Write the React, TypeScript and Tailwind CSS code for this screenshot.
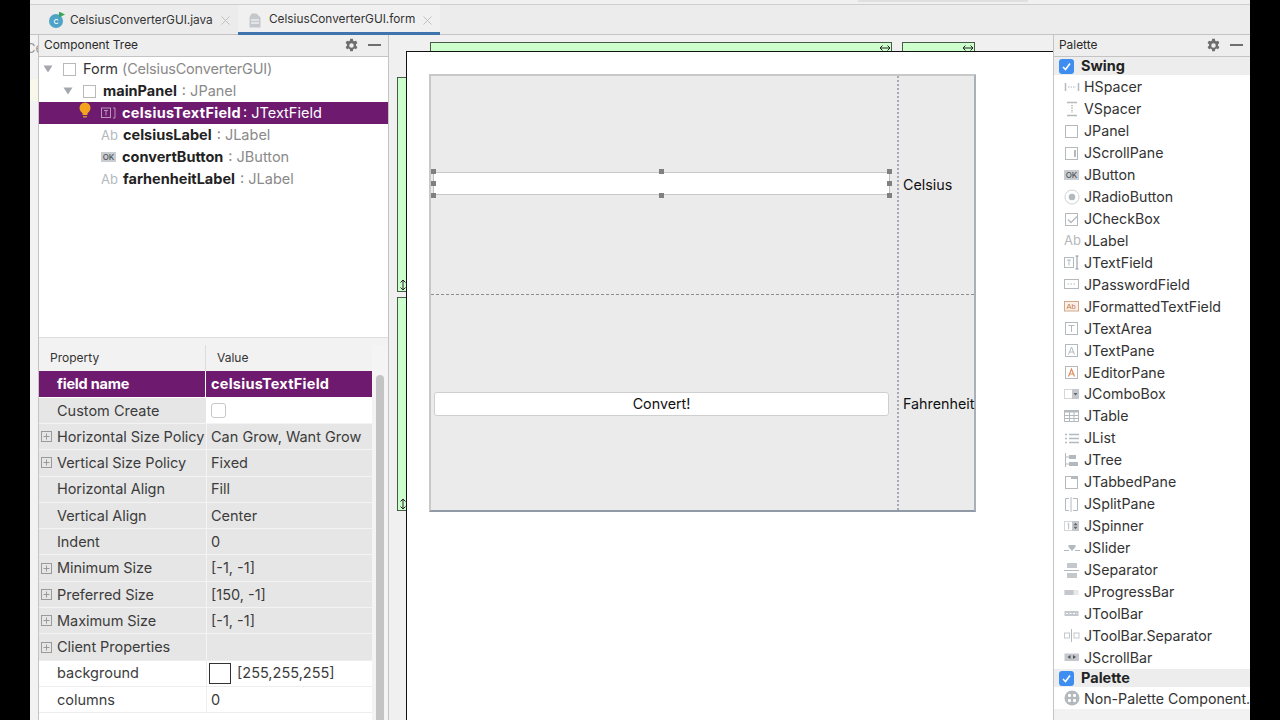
import React from 'react';

const G = '#b4b9be';

const Box = ({ children, w = 16, h = 16 }: { children?: React.ReactNode; w?: number; h?: number }) => (
  <svg width={w} height={h} viewBox="0 0 16 16" fill="none" className="shrink-0">
    {children}
  </svg>
);

const icons: Record<string, React.ReactNode> = {
  HSpacer: <Box><path d="M1.5 4v8M14.5 4v8" stroke={G} strokeWidth="1.5" /><path d="M4 8h8" stroke={G} strokeDasharray="1.5 1" /></Box>,
  VSpacer: <Box><path d="M3 1.5h10M3 14.5h10" stroke={G} strokeWidth="1.5" /><path d="M8 4v8" stroke={G} strokeDasharray="1.5 1" strokeWidth="1.5" /></Box>,
  JPanel: <Box><rect x="1.5" y="2.5" width="12" height="12" stroke={G} /></Box>,
  JScrollPane: <Box><rect x="1.5" y="2.5" width="12" height="12" stroke={G} /><path d="M11 5v7" stroke={G} strokeWidth="2" /></Box>,
  JButton: <OkIcon />,
  JRadioButton: <Box><circle cx="8" cy="8" r="7" stroke="#cfd3d6" /><circle cx="8" cy="8" r="3.3" fill={G} /></Box>,
  JCheckBox: <Box><rect x="1.5" y="2.5" width="12" height="12" stroke={G} /><path d="M4 8.5l3 3 6-6" stroke={G} strokeWidth="1.3" /></Box>,
  JLabel: <AbIcon />,
  JTextField: <Box><rect x="0.5" y="3.5" width="9" height="10" stroke={G} /><path d="M3 6h4M5 6v5.5" stroke={G} /><path d="M13 2v13M11.5 2h3M11.5 15h3" stroke="#8e9499" /></Box>,
  JPasswordField: <Box><rect x="0.5" y="3.5" width="14" height="9" stroke={G} /><path d="M3.5 8h8" stroke={G} strokeDasharray="1.5 1.5" /></Box>,
  JFormattedTextField: <Box><rect x="0.5" y="3.5" width="14" height="9.5" stroke="#d4a78a" fill="#faf0e8" /><text x="2.6" y="11" fontSize="7.5" fill="#c8794a" fontFamily="Liberation Sans, sans-serif">Ab</text></Box>,
  JTextArea: <Box><rect x="1.5" y="2.5" width="12" height="12" stroke={G} /><path d="M4.5 5.5h6M7.5 5.5v6.5" stroke={G} /></Box>,
  JTextPane: <Box><rect x="1.5" y="2.5" width="12" height="12" stroke={G} /><path d="M4.5 12.5L7.5 5l3 7.5M5.5 10h4" stroke={G} /></Box>,
  JEditorPane: <Box><rect x="1.5" y="2.5" width="12" height="12" stroke={G} /><path d="M4.5 12.5L7.5 5l3 7.5M5.5 10h4" stroke="#e08a5a" strokeWidth="1.2" /></Box>,
  JComboBox: <Box><rect x="0.5" y="3.5" width="14" height="9" stroke="#d4d7da" /><rect x="8" y="3" width="7" height="10" fill="#c4c8cc" /><path d="M9.5 7h4l-2 2.5z" fill="#5f6468" /></Box>,
  JTable: <Box><rect x="0.5" y="2.5" width="14" height="11" stroke={G} /><path d="M0.5 3.5h14" stroke={G} strokeWidth="2" /><path d="M0.5 7.5h14M0.5 10.5h14M5.5 3v10M10 3v10" stroke={G} /></Box>,
  JList: <Box><path d="M1 4.5h2M1 8.5h2M1 12.5h2M5 4.5h10M5 8.5h10M5 12.5h10" stroke={G} strokeWidth="1.4" /></Box>,
  JTree: <Box><path d="M1.5 1v14M1.5 5h4M1.5 12h4" stroke={G} /><rect x="5" y="3" width="7" height="4" fill={G} /><rect x="5" y="10" width="9" height="4" fill={G} /></Box>,
  JTabbedPane: <Box><rect x="1.5" y="2.5" width="12" height="12" stroke={G} /><rect x="7" y="2" width="7" height="3" fill={G} /></Box>,
  JSplitPane: <Box><path d="M5 2.5H1.5v12H5M9 2.5h4.5v12H9" stroke={G} /><path d="M7 1v15" stroke={G} /></Box>,
  JSpinner: <Box><rect x="0.5" y="3.5" width="14" height="9" stroke="#d4d7da" /><rect x="8" y="3" width="7" height="10" fill="#c4c8cc" /><path d="M9.5 7.2h4l-2-2.4zM9.5 8.8h4l-2 2.4z" fill="#5f6468" /><path d="M3.5 6l1.2-.8v6" stroke={G} /></Box>,
  JSlider: <Box><path d="M0 10.5h5M11 10.5h5" stroke={G} /><path d="M4.5 5h7v2l-3.5 4-3.5-4z" fill={G} /></Box>,
  JSeparator: <Box><rect x="3" y="1" width="10" height="5" fill="#c4c8cc" /><path d="M0 8.5h15" stroke={G} /><rect x="3" y="11" width="10" height="5" fill="#c4c8cc" /></Box>,
  JProgressBar: <Box><rect x="0.5" y="6" width="14" height="5" fill="#e6e8ea" /><rect x="0.5" y="6" width="9" height="5" fill="#c4c8cc" /></Box>,
  JToolBar: <Box><rect x="0.5" y="6" width="14" height="5" fill="#c4c8cc" /><path d="M2 8.5h11" stroke="#fff" strokeDasharray="2 1.5" /></Box>,
  'JToolBar.Separator': <Box><rect x="0.5" y="6" width="5" height="5" stroke="#c4c8cc" /><path d="M7.5 2v13" stroke={G} /><rect x="10" y="6" width="5" height="5" stroke="#c4c8cc" /></Box>,
  JScrollBar: <Box><rect x="0.5" y="4.5" width="14.5" height="7.5" fill="#c4c8cc" /><path d="M6.5 6v4l-3-2zM9 6v4l3-2z" fill="#4f5458" /></Box>,
  'Non-Palette Component': <Box><circle cx="8" cy="8" r="7.5" fill={G} /><rect x="4" y="4" width="3" height="3" rx="1" fill="#fff" /><rect x="9" y="4" width="3" height="3" rx="1" fill="#fff" /><rect x="4" y="9" width="3" height="3" rx="1" fill="#fff" /><rect x="9" y="9" width="3" height="3" rx="1" fill="#fff" /></Box>,
};

function OkIcon() {
  return (
    <span className="w-[15px] h-[10px] shrink-0 bg-[#c9cdd1] text-[#4f5458] text-[8px] leading-[10px] font-medium text-center">OK</span>
  );
}

function AbIcon() {
  return <span className="w-[17px] shrink-0 text-[#b4b8bc] text-[13px] leading-none text-center">Ab</span>;
}

const Gear = () => (
  <svg width="15" height="15" viewBox="0 0 16 16" fill="#6e6e6e" className="shrink-0">
    <path fillRule="evenodd" d="M6.6.8h2.8l.4 2 1.2.7 1.9-.7 1.4 2.4-1.5 1.4v1.6l1.5 1.4-1.4 2.4-1.9-.7-1.2.7-.4 2H6.6l-.4-2-1.2-.7-1.9.7L1.700 9.600l1.500-1.400V6.600L1.700 5.200l1.400-2.400 1.900.7 1.200-.7zM8 5.500a2.200 2.200 0 100 4.800 2.200 2.200 0 000-4.800z" />
  </svg>
);

const PanelHeader = ({ title }: { title: string }) => (
  <div className="h-[22px] shrink-0 flex items-center bg-[#eeeeee] border-b border-[#c4c4c4] pl-[5px] pr-[7px] pb-[1px] text-[11.900px] text-[#2a2a2a]">
    <span className="flex-1 truncate">{title}</span>
    <Gear />
    <span className="ml-[9px] w-[13px] h-[2px] bg-[#6e6e6e]" />
  </div>
);

const Arrow = () => (
  <svg width="10" height="8" viewBox="0 0 10 8" className="shrink-0">
    <path d="M0.500 0.500h9L5 7.500z" fill="#a4a8ac" />
  </svg>
);

const treeRows = [
  { icon: 'ab', name: 'celsiusLabel', type: 'JLabel' },
  { icon: 'ok', name: 'convertButton', type: 'JButton' },
  { icon: 'ab', name: 'farhenheitLabel', type: 'JLabel' },
];

const ComponentTree = () => (
  <div className="h-[280px] shrink-0 bg-white text-[14.500px] pt-[1px]">
    <div className="h-[22px] flex items-center pl-[4px]">
      <Arrow />
      <span className="ml-[10px] w-[13px] h-[13px] border border-[#b9b9b9]" />
      <span className="ml-[7px] text-[#333]">Form</span>
      <span className="ml-[4px] text-[#8a8a8a] tracking-[-0.2px]">(CelsiusConverterGUI)</span>
    </div>
    <div className="h-[22px] flex items-center pl-[24px]">
      <Arrow />
      <span className="ml-[10px] w-[13px] h-[13px] border border-[#b9b9b9]" />
      <span className="ml-[7px] font-bold text-[#222]">mainPanel</span>
      <span className="ml-[5px] text-[#8a8a8a]">: JPanel</span>
    </div>
    <div className="h-[22px] flex items-center pl-[39px] bg-[#6d1a6f] text-white">
      <svg width="14" height="18" viewBox="0 0 14 18" className="shrink-0 -mt-[4px]">
        <circle cx="7" cy="6" r="5.500" fill="#f3a41f" />
        <rect x="4.500" y="10" width="5" height="3" fill="#f3a41f" />
        <rect x="5" y="14" width="4" height="1.500" fill="#c78a3a" />
      </svg>
      <svg width="16" height="14" viewBox="0 0 16 14" fill="none" className="ml-[9px] shrink-0">
        <rect x="0.500" y="2" width="9" height="9.500" stroke="#b79ab8" />
        <path d="M3 4.500h4M5 4.500v5" stroke="#b79ab8" />
        <path d="M12 2h2v10h-2" stroke="#b79ab8" />
      </svg>
      <span className="ml-[5px] font-bold tracking-[0.3px]">celsiusTextField</span>
      <span className="ml-[2px]">: JTextField</span>
    </div>
    {treeRows.map((r) => (
      <div key={r.name} className="h-[22px] flex items-center pl-[62px]">
        {r.icon === 'ab' ? <AbIcon /> : <OkIcon />}
        <span className={`font-bold text-[#222] ${r.icon === 'ab' ? 'ml-[5px]' : 'ml-[6px]'}`}>{r.name}</span>
        <span className="ml-[5px] text-[#8a8a8a]">: {r.type}</span>
      </div>
    ))}
  </div>
);

const Plus = () => (
  <svg width="11" height="11" viewBox="0 0 11 11" fill="none" className="shrink-0">
    <rect x="0.500" y="0.500" width="10" height="10" stroke="#9a9a9a" />
    <path d="M2.500 5.500h6M5.500 2.500v6" stroke="#9a9a9a" />
  </svg>
);

const propRows: { name: string; value: string; plus?: boolean }[] = [
  { name: 'Horizontal Size Policy', value: 'Can Grow, Want Grow', plus: true },
  { name: 'Vertical Size Policy', value: 'Fixed', plus: true },
  { name: 'Horizontal Align', value: 'Fill' },
  { name: 'Vertical Align', value: 'Center' },
  { name: 'Indent', value: '0' },
  { name: 'Minimum Size', value: '[-1, -1]', plus: true },
  { name: 'Preferred Size', value: '[150, -1]', plus: true },
  { name: 'Maximum Size', value: '[-1, -1]', plus: true },
  { name: 'Client Properties', value: '', plus: true },
];

const PropName = ({ row }: { row: { name: string; plus?: boolean } }) => (
  <div className="w-[167px] shrink-0 flex items-center pl-[2px]">
    <span className="w-[16px] flex">{row.plus && <Plus />}</span>
    <span className="whitespace-nowrap tracking-[-0.05px]">{row.name}</span>
  </div>
);

const PropertyTable = () => (
  <div className="flex-1 min-h-0 flex bg-[#f2f2f2] overflow-hidden">
    <div className="w-[333px] shrink-0 text-[14.500px] text-[#3c3c3c]">
      <div className="h-[26px] flex items-center text-[12px] text-[#333]">
        <span className="w-[167px] pl-[11px] border-r border-[#dcdcdc] leading-[26px]">Property</span>
        <span className="pl-[11px]">Value</span>
      </div>
      <div className="h-[26px] flex bg-[#6d1a6f] text-white font-bold">
        <span className="w-[167px] pl-[18px] leading-[26px] border-r border-white tracking-[-0.2px]">field name</span>
        <span className="pl-[5px] leading-[26px] tracking-[0.25px]">celsiusTextField</span>
      </div>
      <div className="h-[26px] flex border-t border-white">
        <div className="w-[167px] pl-[18px] flex items-center bg-[#e6e6e6]">Custom Create</div>
        <div className="flex-1 bg-white pl-[5px] flex items-center">
          <span className="w-[15px] h-[15px] rounded-[3px] border border-[#c8c8c8] bg-white" />
        </div>
      </div>
      {propRows.map((row) => (
        <div key={row.name} className="h-[26.300px] flex border-t border-[#f4f4f4] bg-[#e6e6e6]">
          <PropName row={row} />
          <div className="flex-1 pl-[4px] flex items-center border-l border-[#f4f4f4] whitespace-nowrap">{row.value}</div>
        </div>
      ))}
      <div className="h-[26.300px] flex border-t border-[#eeeeee] bg-white">
        <div className="w-[167px] pl-[18px] flex items-center">background</div>
        <div className="flex-1 pl-[2px] flex items-center border-l border-[#eeeeee]">
          <span className="w-[22px] h-[21px] border border-[#333] bg-white" />
          <span className="ml-[6px]">[255,255,255]</span>
        </div>
      </div>
      <div className="h-[26.300px] flex border-t border-[#eeeeee] bg-white">
        <div className="w-[167px] pl-[18px] flex items-center">columns</div>
        <div className="flex-1 pl-[4px] flex items-center border-l border-[#eeeeee]">0</div>
      </div>
      <div className="h-[26.300px] flex border-t border-[#eeeeee] bg-white" />
    </div>
    <div className="flex-1 pt-[30px] pl-[4px] pr-[4px] bg-[#f4f4f4]">
      <div className="h-full w-[8px] rounded-t-[4px] bg-[#c4c4c4]" />
    </div>
  </div>
);

const Handle = ({ className }: { className: string }) => (
  <span className={`absolute w-[5px] h-[5px] bg-[#808080] ${className}`} />
);

const DoubleArrow = ({ vertical }: { vertical?: boolean }) => (
  <svg width="12" height="12" viewBox="0 0 12 12" fill="none" className={vertical ? 'rotate-90' : ''}>
    <path d="M1 6h10M3.500 3.500L1 6l2.500 2.500M8.500 3.500L11 6 8.500 8.500" stroke="#222" />
  </svg>
);

const Designer = () => (
  <div className="relative flex-1 min-w-0 bg-[#f0f0f0] border-x border-[#c4c4c4] overflow-hidden">
    {/* rulers around the form, placed on the free canvas */}
    <div className="absolute left-[41px] top-[7px] w-[462px] h-[10px] bg-[#ccffcc] border-t border-x border-[#4a5a4a] flex justify-end items-center"><DoubleArrow /></div>
    <div className="absolute left-[513px] top-[7px] w-[73px] h-[10px] bg-[#ccffcc] border-t border-x border-[#4a5a4a] flex justify-end items-center"><DoubleArrow /></div>
    <div className="absolute left-[8px] top-[42px] w-[10px] h-[215px] bg-[#ccffcc] border border-r-0 border-[#4a5a4a] flex flex-col justify-end items-center"><DoubleArrow vertical /></div>
    <div className="absolute left-[8px] top-[262px] w-[10px] h-[214px] bg-[#ccffcc] border border-r-0 border-[#4a5a4a] flex flex-col justify-end items-center"><DoubleArrow vertical /></div>

    <div className="absolute left-[17px] top-[16px] right-0 bottom-0 bg-white border-t border-l border-[#111]">
      <div className="absolute left-[22px] top-[22px] w-[547px] h-[438px] bg-[#ebebeb] border-2 border-[#c8c8c8] border-r-[#a9b0b8] border-b-[#8f9aa6] text-[14.300px] text-[#111]">
        <div className="absolute left-0 right-0 top-[218px] border-t border-dashed border-[#8e8e8e]" />
        <div className="absolute top-0 bottom-0 left-[466px] border-l-2 border-dotted border-[#a8a8b4]" />

        <div className="absolute left-[3px] top-[96px] w-[455px] h-[23px] bg-white border-y border-[#c8c8c8]" />
        <div className="absolute left-[2px] top-[95px] h-[24px] border-l border-[#c0c0c0]" />
        <div className="absolute left-[458px] top-[95px] h-[24px] border-l border-[#c0c0c0]" />
        <Handle className="left-0 top-[93px]" />
        <Handle className="left-0 top-[105px]" />
        <Handle className="left-0 top-[117px]" />
        <Handle className="left-[228px] top-[93px]" />
        <Handle className="left-[228px] top-[117px]" />
        <Handle className="left-[456px] top-[93px]" />
        <Handle className="left-[456px] top-[105px]" />
        <Handle className="left-[456px] top-[117px]" />
        <div className="absolute left-[472px] top-[98px]">Celsius</div>

        <div className="absolute left-[3px] top-[316px] w-[455px] h-[24px] bg-white border border-[#cfcfcf] rounded-[3px] flex items-center justify-center">Convert!</div>
        <div className="absolute left-[472px] top-[317px]">Fahrenheit</div>
      </div>
    </div>
  </div>
);

const paletteTop = ['HSpacer', 'VSpacer', 'JPanel', 'JScrollPane', 'JButton', 'JRadioButton', 'JCheckBox', 'JLabel', 'JTextField', 'JPasswordField', 'JFormattedTextField', 'JTextArea', 'JTextPane', 'JEditorPane', 'JComboBox', 'JTable', 'JList', 'JTree', 'JTabbedPane', 'JSplitPane', 'JSpinner', 'JSlider', 'JSeparator', 'JProgressBar', 'JToolBar', 'JToolBar.Separator', 'JScrollBar'];

const Group = ({ title }: { title: string }) => (
  <div className="h-[18px] shrink-0 flex items-center bg-[#ededed] pl-[5px] font-bold text-[#222] text-[14.500px]">
    <span className="w-[15px] h-[15px] rounded-[3px] bg-[#3d8ef0] flex items-center justify-center">
      <svg width="11" height="11" viewBox="0 0 11 11" fill="none">
        <path d="M2 6l2.500 2.500L9 2.500" stroke="#fff" strokeWidth="1.600" />
      </svg>
    </span>
    <span className="ml-[7px]">{title}</span>
  </div>
);

const PaletteItem = ({ name, label }: { name: string; label?: string }) => (
  <div className="h-[21.950px] flex items-center pl-[10px] whitespace-nowrap text-[#333]">
    <span className="w-[20px] flex items-center shrink-0">{icons[name]}</span>
    <span>{label ?? name}</span>
  </div>
);

const Palette = () => (
  <div className="w-[196px] shrink-0 flex flex-col bg-white overflow-hidden">
    <PanelHeader title="Palette" />
    <div className="flex-1 text-[14.200px] flex flex-col">
      <Group title="Swing" />
      <div className="pt-[1px] pb-[1px]">
        {paletteTop.map((n) => <PaletteItem key={n} name={n} />)}
      </div>
      <Group title="Palette" />
      <div className="h-[22px]">
        <PaletteItem name="Non-Palette Component" label="Non-Palette Component." />
      </div>
      <div className="flex-1 bg-[#f2f2f2]" />
    </div>
  </div>
);

const TabClose = () => (
  <svg width="9" height="9" viewBox="0 0 9 9" fill="none" className="ml-[8px] shrink-0">
    <path d="M0.500 0.500l8 8M8.500 0.500l-8 8" stroke="#c0c0c0" />
  </svg>
);

export default function App() {
  return (
    <div className="w-[1280px] h-[720px] bg-black px-[30px] overflow-hidden font-['Inter','Liberation_Sans',sans-serif]">
      <div className="w-[1220px] h-full flex flex-col bg-[#f2f2f2]">
        <div className="h-[5px] shrink-0 flex bg-[#f0f0f0] border-b border-[#cfcfcf]">
          <div className="w-[828px]" />
          <div className="w-[170px] h-[2px] bg-[#e0e0e0]" />
        </div>
        <div className="h-[30px] shrink-0 flex bg-[#ececec] border-b border-[#c4c4c4] text-[11.800px] text-[#333]">
          <div className="w-[8px]" />
          <div className="w-[200px] flex items-center pl-[11px] pt-[2px]">
            <span className="relative w-[14px] h-[14px] rounded-full bg-[#4fa3c7] text-white text-[9px] leading-[14px] text-center">c
              <span className="absolute -top-[2px] -right-[2px] w-[6px] h-[6px] bg-[#3aa655] [clip-path:polygon(0_0,100%_50%,0_100%)]" />
            </span>
            <span className="ml-[7px]">CelsiusConverterGUI.java</span>
            <TabClose />
          </div>
          <div className="w-[202px] flex items-center pl-[11px] bg-[#f0f0f0] border-b-[3px] border-[#3f74ac] -mb-px pt-[3px]">
            <svg width="12" height="15" viewBox="0 0 12 15" className="shrink-0">
              <path d="M2.500 0.500h5l4 4v10h-11v-10z" fill="#c4c8cc" />
              <path d="M2 7h8M2 10h8" stroke="#fff" />
            </svg>
            <span className="ml-[8px]">CelsiusConverterGUI.form</span>
            <TabClose />
          </div>
        </div>
        <div className="flex-1 min-h-0 flex">
          <div className="w-[8px] shrink-0 bg-[#f2f2f2] text-[13px] text-[#999] overflow-hidden whitespace-nowrap pt-[4px]">
            <span className="-ml-[4px] block">Ce</span>
            <div className="mt-[20px] h-[22px] bg-[#f7f8ea]" />
          </div>
          <div className="w-[350px] shrink-0 flex flex-col bg-white border-l border-[#c4c4c4]">
            <PanelHeader title="Component Tree" />
            <ComponentTree />
            <div className="h-[8px] shrink-0 bg-[#f2f2f2] border-t border-[#dddddd]" />
            <PropertyTable />
          </div>
          <Designer />
          <Palette />
        </div>
      </div>
    </div>
  );
}
